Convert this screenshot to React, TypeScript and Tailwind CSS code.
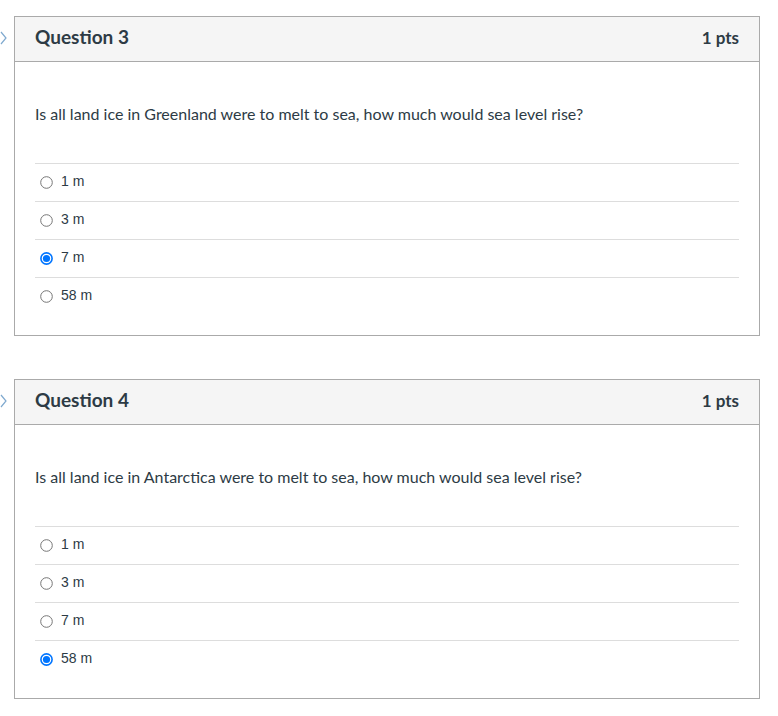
import React from "react";

type Q = { num: number; text: string; answers: string[]; selected: number };

const questions: Q[] = [
  {
    num: 3,
    text: "Is all land ice in Greenland were to melt to sea, how much would sea level rise?",
    answers: ["1 m", "3 m", "7 m", "58 m"],
    selected: 2,
  },
  {
    num: 4,
    text: "Is all land ice in Antarctica were to melt to sea, how much would sea level rise?",
    answers: ["1 m", "3 m", "7 m", "58 m"],
    selected: 3,
  },
];

function Radio({ checked }: { checked: boolean }) {
  if (checked) {
    return (
      <svg width="13" height="13" viewBox="0 0 13 13">
        <circle cx="6.5" cy="6.5" r="5.6" fill="white" stroke="#0075ff" strokeWidth="1.6" />
        <circle cx="6.5" cy="6.5" r="3.6" fill="#0075ff" />
      </svg>
    );
  }
  return (
    <svg width="13" height="13" viewBox="0 0 13 13">
      <circle cx="6.5" cy="6.5" r="5.8" fill="white" stroke="#767676" strokeWidth="1" />
    </svg>
  );
}

function Card({ q }: { q: Q }) {
  return (
    <div className="relative">
      <svg className="absolute left-[-14px] top-[15px]" width="8" height="14" viewBox="0 0 8 14">
        <path d="M1 1 L6 7 L1 13" fill="none" stroke="#7fa9cf" strokeWidth="1.2" />
      </svg>
      <div className="border border-[#aaaaaa] bg-white">
        <div className="flex h-[45px] items-center justify-between border-b border-[#aaaaaa] bg-[#f5f5f5] px-5 pb-[3px]">
          <div className="text-[19px] font-bold text-[#2d3b45]">Question {q.num}</div>
          <div className="pt-[1px] text-[17px] font-bold text-[#2d3b45]">1 pts</div>
        </div>
        <div className="px-5 pb-[20px] pt-[42px]">
          <div className="text-[16px] leading-[20px] text-[#2d3b45]">{q.text}</div>
          <div className="mt-[39px]">
            {q.answers.map((a, i) => (
              <div
                key={a}
                className="flex h-[38px] items-center gap-[8px] border-t border-[#dddddd] pl-[5px]"
                style={{ fontFamily: '"Liberation Sans", Arial, sans-serif' }}
              >
                <Radio checked={i === q.selected} />
                <span className="pb-[2px] text-[14px] text-[#2d3b45]">{a}</span>
              </div>
            ))}
          </div>
        </div>
      </div>
    </div>
  );
}

export default function App() {
  return (
    <div
      className="min-h-[716px] w-[778px] bg-white pl-[14px] pr-[18px] pt-[16px]"
      style={{ fontFamily: 'Lato, "Noto Sans", sans-serif' }}
    >
      <div className="flex flex-col gap-[43px]">
        {questions.map((q) => (
          <Card key={q.num} q={q} />
        ))}
      </div>
    </div>
  );
}
